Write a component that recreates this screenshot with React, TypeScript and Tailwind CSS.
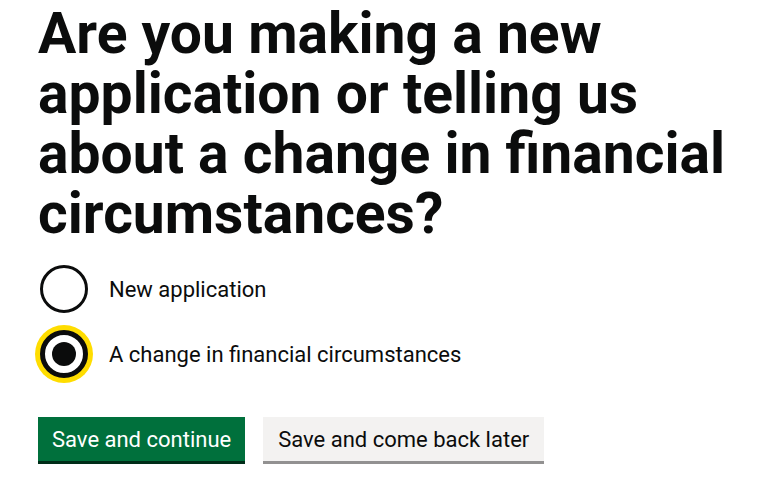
export default function App() {
  return (
    <div
      className="min-h-screen bg-white text-[#0b0c0c] pl-[38px] pt-1"
      style={{ fontFamily: "Roboto, 'Liberation Sans', Arial, sans-serif" }}
    >
      <h1 className="text-[57px] leading-[60px] font-bold whitespace-nowrap">
        Are you making a new
        <br />
        application or telling us
        <br />
        about a change in financial
        <br />
        circumstances?
      </h1>

      <div className="mt-[21px] pl-[2px] flex flex-col gap-[17px]">
        <label className="flex items-center gap-[21px] h-12">
          <span className="w-12 h-12 rounded-full border-[3px] border-[#0b0c0c] bg-white shrink-0" />
          <span className="text-[22px]">New application</span>
        </label>
        <label className="flex items-center gap-[21px] h-12">
          <span className="w-12 h-12 rounded-full border-[5px] border-[#0b0c0c] bg-white shrink-0 ring-[5px] ring-[#ffdd00] flex items-center justify-center">
            <span className="w-6 h-6 rounded-full bg-[#0b0c0c]" />
          </span>
          <span className="text-[22px]">A change in financial circumstances</span>
        </label>
      </div>

      <div className="mt-[39px] flex gap-[18px]">
        <button className="h-[44px] px-[14px] bg-[#00703c] text-white text-[22px] shadow-[0_3px_0_#002d18]">
          Save and continue
        </button>
        <button className="h-[44px] px-[15px] bg-[#f3f2f1] text-[#0b0c0c] text-[22px] shadow-[0_3px_0_#929191]">
          Save and come back later
        </button>
      </div>
    </div>
  );
}
